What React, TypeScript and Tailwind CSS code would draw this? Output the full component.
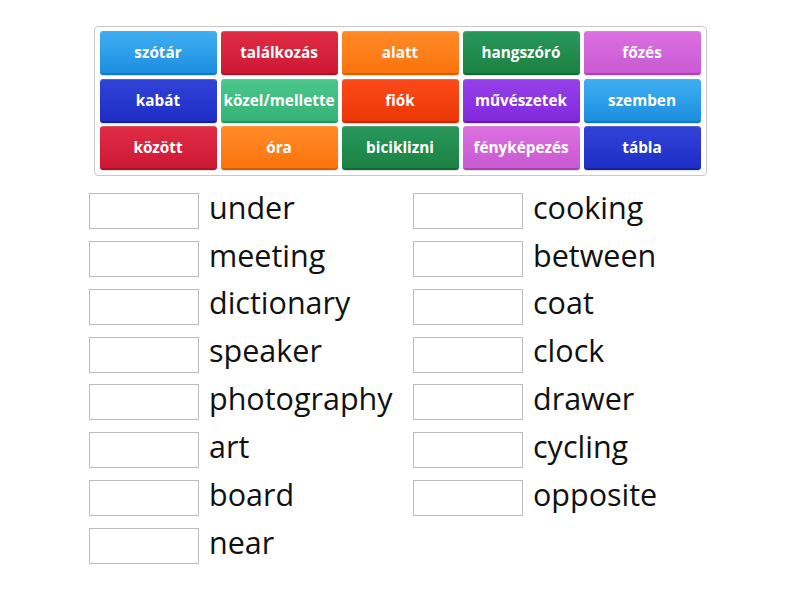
const tiles = [
  { label: 'szótár', cls: 'from-[#3eaef2] to-[#1b8edf] border-b-[#1479c4]' },
  { label: 'találkozás', cls: 'from-[#e12b45] to-[#cc1833] border-b-[#a91229]' },
  { label: 'alatt', cls: 'from-[#ff8a26] to-[#fb7408] border-b-[#d66000]' },
  { label: 'hangszóró', cls: 'from-[#27985a] to-[#1c8243] border-b-[#146a35]' },
  { label: 'főzés', cls: 'from-[#db70e0] to-[#c95ad2] border-b-[#a843b0]' },
  { label: 'kabát', cls: 'from-[#3142d8] to-[#1e2ec5] border-b-[#1522a0]' },
  { label: 'közel/mellette', cls: 'from-[#4cc78c] to-[#35b277] border-b-[#25945f]' },
  { label: 'fiók', cls: 'from-[#fb4a18] to-[#ec3605] border-b-[#c72900]' },
  { label: 'művészetek', cls: 'from-[#9640ea] to-[#8228dc] border-b-[#671bb6]' },
  { label: 'szemben', cls: 'from-[#3eaef2] to-[#1b8edf] border-b-[#1479c4]' },
  { label: 'között', cls: 'from-[#e12b45] to-[#cc1833] border-b-[#a91229]' },
  { label: 'óra', cls: 'from-[#ff8a26] to-[#fb7408] border-b-[#d66000]' },
  { label: 'biciklizni', cls: 'from-[#27985a] to-[#1c8243] border-b-[#146a35]' },
  { label: 'fényképezés', cls: 'from-[#db70e0] to-[#c95ad2] border-b-[#a843b0]' },
  { label: 'tábla', cls: 'from-[#3142d8] to-[#1e2ec5] border-b-[#1522a0]' },
];

const leftWords = ['under', 'meeting', 'dictionary', 'speaker', 'photography', 'art', 'board', 'near'];
const rightWords = ['cooking', 'between', 'coat', 'clock', 'drawer', 'cycling', 'opposite'];

function Row({ word }: { word: string }) {
  return (
    <div className="flex items-center h-[36px]">
      <div className="w-[110px] h-[36px] border border-[#bdbdbd] bg-white shrink-0" />
      <span className="ml-[10px] text-[30.5px] leading-none text-[#111] pb-[8px]">{word}</span>
    </div>
  );
}

export default function App() {
  return (
    <div className="w-[800px] h-[600px] bg-white font-['Open_Sans',sans-serif] pt-[26px]">
      {/* Tile bank */}
      <div className="w-[613px] mx-auto border border-[#c8c8c8] rounded-[4px] pl-[5px] pt-[4px] pb-[5px]">
        <div className="grid grid-cols-[repeat(5,117px)] gap-x-[4px] gap-y-[3.5px]">
          {tiles.map((t) => (
            <div
              key={t.label}
              className={`h-[44px] rounded-[3px] bg-gradient-to-b border-b-2 border-t border-t-white/25 flex items-center justify-center text-white font-bold text-[15.3px] shadow-[0_1px_1px_rgba(0,0,0,0.15)] ${t.cls}`}
            >
              {t.label}
            </div>
          ))}
        </div>
      </div>

      {/* Answer rows */}
      <div className="w-[622px] mx-auto mt-[17px] grid grid-cols-[324px_1fr]">
        <div className="flex flex-col gap-[11.85px]">
          {leftWords.map((w) => (
            <Row key={w} word={w} />
          ))}
        </div>
        <div className="flex flex-col gap-[11.85px]">
          {rightWords.map((w) => (
            <Row key={w} word={w} />
          ))}
        </div>
      </div>
    </div>
  );
}
